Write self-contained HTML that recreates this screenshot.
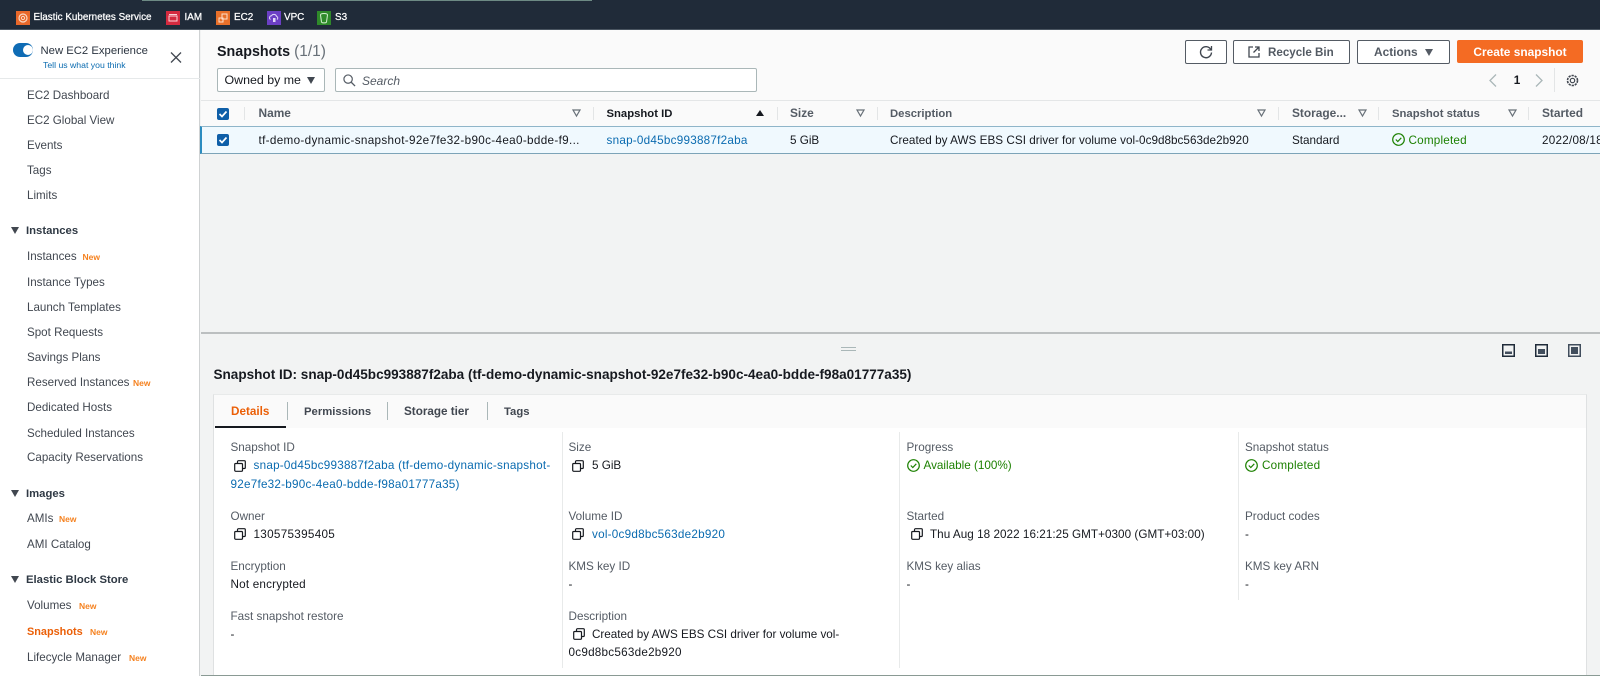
<!DOCTYPE html>
<html lang="en"><head><meta charset="utf-8"><title>Snapshots | EC2</title>
<style>
*{box-sizing:border-box}
html,body{margin:0;padding:0;width:1600px;height:676px;overflow:hidden;background:#f2f3f3}
body{position:relative;font:11.7px/16px "Liberation Sans",sans-serif;color:#16191f}
.a{position:absolute}
.t{position:absolute;white-space:nowrap;line-height:16px}
.w{letter-spacing:.24px}
.nav{color:#fff;font-size:9.9px;font-weight:400;-webkit-text-stroke:.25px #fff}
.s{color:#414750;font-size:11.6px;margin-top:1px}
.h{color:#2f3944;font-size:11.3px;font-weight:700;margin-top:1px}
.new{color:#f58220;font-size:8.5px;font-weight:700}
.th{color:#545b64;font-weight:700;font-size:11.3px}
.th0{color:#16191f;font-weight:700;font-size:11.3px}
.tab{font-size:11.3px;font-weight:700;color:#414750}
.l{color:#0a6bb0}
.g{color:#1d8102}
.lb{color:#545b64;font-size:11.7px}
.btn{position:absolute;top:40px;height:24px;background:#fff;border:1px solid #545b64;border-radius:2px}
.sep{position:absolute;width:1px;background:#e3e5e6}
.tri{position:absolute;width:0;height:0;border-left:4.5px solid transparent;border-right:4.5px solid transparent;border-top:7px solid #545b64}
.chk{position:absolute;width:12px;height:12px;background:#0f5fa8;border-radius:2px}
svg{position:absolute;display:block;overflow:visible}
</style></head><body>

<!-- top nav -->
<div class="a" style="left:0;top:0;width:1600px;height:30px;background:#202b39"></div>
<div class="a" style="left:0;top:29px;width:1600px;height:1px;background:#4a5561"></div>
<div class="a" style="left:142px;top:0;width:450px;height:1px;background:#6d8a84"></div>
<svg style="left:16px;top:10.5px" width="14" height="14" viewBox="0 0 14 14"><rect width="14" height="14" fill="#e8682a"/><circle cx="7" cy="7" r="4" fill="none" stroke="#fbd9c4" stroke-width="1.2"/><circle cx="7" cy="7" r="1.6" fill="none" stroke="#fbd9c4"/></svg>
<div class="t nav" style="left:33.5px;top:10px">Elastic Kubernetes Service</div>
<svg style="left:166px;top:10.5px" width="14" height="14" viewBox="0 0 14 14"><rect width="14" height="14" fill="#d42a3f"/><rect x="3" y="5" width="8" height="5" fill="none" stroke="#fbd3d8"/><rect x="3" y="3" width="8" height="1" fill="#fbd3d8"/></svg>
<div class="t nav" style="left:184.5px;top:10px">IAM</div>
<svg style="left:216px;top:10.5px" width="14" height="14" viewBox="0 0 14 14"><rect width="14" height="14" fill="#e8702a"/><rect x="6" y="3" width="5" height="5" fill="none" stroke="#fde0cc"/><rect x="3" y="7" width="4" height="4" fill="none" stroke="#fde0cc"/></svg>
<div class="t nav" style="left:234px;top:10px">EC2</div>
<svg style="left:266.5px;top:10.5px" width="14" height="14" viewBox="0 0 14 14"><rect width="14" height="14" fill="#6b3fc4"/><path d="M3.5 8.5a2 2 0 0 1 1-3.7 2.7 2.7 0 0 1 5 .5 1.8 1.8 0 0 1 .5 3.2" fill="none" stroke="#e2d8f8"/><rect x="6" y="7" width="2.5" height="4" fill="#e2d8f8"/></svg>
<div class="t nav" style="left:284px;top:10px">VPC</div>
<svg style="left:317px;top:10.5px" width="14" height="14" viewBox="0 0 14 14"><rect width="14" height="14" fill="#2f8a2a"/><path d="M3.5 4c0-2 7-2 7 0l-1 7c-.3 1.2-4.700 1.200-5 0z" fill="none" stroke="#d4f0d0"/></svg>
<div class="t nav" style="left:335px;top:10px">S3</div>

<!-- sidebar -->
<div class="a" style="left:0;top:30px;width:200px;height:646px;background:#fff;border-right:1px solid #cfd2d3"></div>
<div class="a" style="left:13px;top:43px;width:20px;height:14px;border-radius:7px;background:#0f6cb5"></div>
<div class="a" style="left:23px;top:45px;width:10px;height:10px;border-radius:5px;background:#fff"></div>
<div class="t" style="left:40.500px;top:43px;font-size:11.300px;color:#2b3440">New EC2 Experience</div>
<div class="t l" style="left:43px;top:56.500px;font-size:8.700px">Tell us what you think</div>
<svg style="left:170px;top:52px" width="12" height="11" viewBox="0 0 12 11"><path d="M1 .5l10 10M11 .5L1 10.500" stroke="#414750" stroke-width="1.300" fill="none"/></svg>
<div class="a" style="left:0;top:78px;width:200px;height:1px;background:#e6e9ea"></div>

<div class="t s" style="left:27px;top:87px">EC2 Dashboard</div>
<div class="t s" style="left:27px;top:112px">EC2 Global View</div>
<div class="t s" style="left:27px;top:137px">Events</div>
<div class="t s" style="left:27px;top:162px">Tags</div>
<div class="t s" style="left:27px;top:187px">Limits</div>

<div class="tri" style="left:11px;top:226.500px;border-top-color:#414750"></div>
<div class="t h" style="left:26px;top:222px">Instances</div>
<div class="t s" style="left:27px;top:248px">Instances</div><div class="t new" style="left:82.500px;top:248.500px">New</div>
<div class="t s" style="left:27px;top:274px">Instance Types</div>
<div class="t s" style="left:27px;top:299px">Launch Templates</div>
<div class="t s" style="left:27px;top:324px">Spot Requests</div>
<div class="t s" style="left:27px;top:349px">Savings Plans</div>
<div class="t s" style="left:27px;top:374px">Reserved Instances</div><div class="t new" style="left:133px;top:374.500px">New</div>
<div class="t s" style="left:27px;top:399px">Dedicated Hosts</div>
<div class="t s" style="left:27px;top:424.500px">Scheduled Instances</div>
<div class="t s" style="left:27px;top:449px">Capacity Reservations</div>

<div class="tri" style="left:11px;top:489.500px;border-top-color:#414750"></div>
<div class="t h" style="left:26px;top:484.500px">Images</div>
<div class="t s" style="left:27px;top:510px">AMIs</div><div class="t new" style="left:59px;top:510.500px">New</div>
<div class="t s" style="left:27px;top:536px">AMI Catalog</div>

<div class="tri" style="left:11px;top:575.500px;border-top-color:#414750"></div>
<div class="t h" style="left:26px;top:571px">Elastic Block Store</div>
<div class="t s" style="left:27px;top:597px">Volumes</div><div class="t new" style="left:79px;top:597.500px">New</div>
<div class="t" style="left:27px;top:624px;font-size:10.900px;font-weight:700;color:#eb5f07">Snapshots</div><div class="t new" style="left:90px;top:623.500px">New</div>
<div class="t s" style="left:27px;top:649px">Lifecycle Manager</div><div class="t new" style="left:129px;top:649.500px">New</div>

<!-- upper main header -->
<div class="a" style="left:201px;top:30px;width:1399px;height:70px;background:#fafafa"></div>
<div class="t" style="left:217px;top:44px;font-size:14.300px;font-weight:700;color:#16191f">Snapshots <span style="font-weight:400;color:#687078;font-size:15.500px">(1/1)</span></div>

<div class="a" style="left:217px;top:68px;width:108px;height:24px;background:#fff;border:1px solid #aab7b8;border-radius:2px"></div>
<div class="t" style="left:224.500px;top:72px;font-size:12.400px;color:#16191f">Owned by me</div>
<div class="tri" style="left:306.500px;top:77px;border-top-color:#414750"></div>
<div class="a" style="left:335px;top:68px;width:422px;height:24px;background:#fff;border:1px solid #aab7b8;border-radius:2px"></div>
<svg style="left:343px;top:74px" width="13" height="13" viewBox="0 0 14 14"><circle cx="5.500" cy="5.500" r="4.500" fill="none" stroke="#545b64" stroke-width="1.300"/><path d="M9 9l4 4" stroke="#545b64" stroke-width="1.400"/></svg>
<div class="t" style="left:362px;top:73px;font-size:12px;font-style:italic;color:#545b64">Search</div>

<div class="btn" style="left:1185px;width:42px"></div>
<svg style="left:1199px;top:45px" width="14" height="14" viewBox="0 0 14 14"><path d="M11.800 4.500A5.500 5.500 0 1 0 12.500 7.500" fill="none" stroke="#414750" stroke-width="1.400"/><path d="M12.500 1v4h-4" fill="none" stroke="#414750" stroke-width="1.300"/></svg>
<div class="btn" style="left:1233px;width:117px"></div>
<svg style="left:1248px;top:46px" width="12" height="12" viewBox="0 0 12 12"><path d="M5 1H1v10h10V7M7 1h4v4M11 1L5.500 6.500" fill="none" stroke="#414750" stroke-width="1.300"/></svg>
<div class="t" style="left:1268px;top:45px;font-size:11.600px;font-weight:700;color:#545b64">Recycle Bin</div>
<div class="btn" style="left:1357px;width:93px"></div>
<div class="t" style="left:1374px;top:44px;font-size:11.900px;font-weight:700;color:#545b64">Actions</div>
<div class="tri" style="left:1425px;top:49px;border-left-width:4.500px;border-right-width:4.500px;border-top-color:#545b64"></div>
<div class="a" style="left:1457px;top:40px;width:126px;height:23px;background:#f46b23;border-radius:2px"></div>
<div class="t" style="left:1457px;top:44px;width:126px;text-align:center;font-size:11.900px;font-weight:700;color:#fff">Create snapshot</div>

<svg style="left:1489px;top:74px" width="8" height="13" viewBox="0 0 8 13"><path d="M7 .5L1 6.500l6 6" fill="none" stroke="#aab7b8" stroke-width="1.300"/></svg>
<div class="t" style="left:1512px;top:73px;width:10px;text-align:center;font-size:11.700px;font-weight:700;color:#16191f">1</div>
<svg style="left:1535px;top:74px" width="8" height="13" viewBox="0 0 8 13"><path d="M1 .5l6 6-6 6" fill="none" stroke="#aab7b8" stroke-width="1.300"/></svg>
<div class="sep" style="left:1554px;top:68px;height:24px"></div>
<svg style="left:1566px;top:74px" width="13" height="13" viewBox="0 0 13 13"><circle cx="6.500" cy="6.500" r="2.200" fill="none" stroke="#414750" stroke-width="1.200"/><circle cx="6.500" cy="6.500" r="5" fill="none" stroke="#414750" stroke-width="1.600" stroke-dasharray="2.300 .9"/></svg>

<!-- table -->
<div class="a" style="left:201px;top:100px;width:1399px;height:27px;background:#fafafa;border-top:1px solid #e4e6e7"></div>
<div class="chk" style="left:217px;top:107.500px"></div>
<svg style="left:217px;top:107.500px" width="12" height="12" viewBox="0 0 12 12"><path d="M2.500 6l2.500 2.500 4.500-5" fill="none" stroke="#fff" stroke-width="1.700"/></svg>
<div class="sep" style="left:244px;top:107px;height:13px"></div>
<div class="t th" style="left:258.500px;top:105px;font-size:11.900px">Name</div>
<svg style="left:572px;top:109px" width="9" height="8" viewBox="0 0 9 8"><path d="M1 1h7L4.500 7z" fill="none" stroke="#687078" stroke-width="1.200"/></svg>
<div class="sep" style="left:592.500px;top:107px;height:13px"></div>
<div class="t th0" style="left:606.500px;top:106px">Snapshot ID</div>
<div class="a" style="left:756px;top:110px;width:0;height:0;border-left:4.500px solid transparent;border-right:4.500px solid transparent;border-bottom:6.500px solid #16191f"></div>
<div class="sep" style="left:776.500px;top:107px;height:13px"></div>
<div class="t th" style="left:790px;top:105px;font-size:11.900px">Size</div>
<svg style="left:855.500px;top:109px" width="9" height="8" viewBox="0 0 9 8"><path d="M1 1h7L4.500 7z" fill="none" stroke="#687078" stroke-width="1.200"/></svg>
<div class="sep" style="left:876.500px;top:107px;height:13px"></div>
<div class="t th" style="left:890px;top:106px">Description</div>
<svg style="left:1257px;top:109px" width="9" height="8" viewBox="0 0 9 8"><path d="M1 1h7L4.500 7z" fill="none" stroke="#687078" stroke-width="1.200"/></svg>
<div class="sep" style="left:1278px;top:107px;height:13px"></div>
<div class="t th" style="left:1292px;top:105px;font-size:11.900px">Storage...</div>
<svg style="left:1357.500px;top:109px" width="9" height="8" viewBox="0 0 9 8"><path d="M1 1h7L4.500 7z" fill="none" stroke="#687078" stroke-width="1.200"/></svg>
<div class="sep" style="left:1378px;top:107px;height:13px"></div>
<div class="t th" style="left:1392px;top:106px">Snapshot status</div>
<svg style="left:1507.500px;top:109px" width="9" height="8" viewBox="0 0 9 8"><path d="M1 1h7L4.500 7z" fill="none" stroke="#687078" stroke-width="1.200"/></svg>
<div class="sep" style="left:1528px;top:107px;height:13px"></div>
<div class="t th" style="left:1542px;top:105px;font-size:11.900px">Started</div>

<div class="a" style="left:200px;top:126px;width:1400px;height:28px;background:#f0f9fe;border-top:1px solid #8fb5c9;border-bottom:1px solid #7da4b8;border-left:2px solid #2b8cc0"></div>
<div class="chk" style="left:217px;top:134px"></div>
<svg style="left:217px;top:134px" width="12" height="12" viewBox="0 0 12 12"><path d="M2.500 6l2.500 2.500 4.500-5" fill="none" stroke="#fff" stroke-width="1.700"/></svg>
<div class="t" style="left:258.500px;top:133px;width:322px;overflow:hidden;letter-spacing:.33px">tf-demo-dynamic-snapshot-92e7fe32-b90c-4ea0-bdde-f9...</div>
<div class="t l w" style="left:606.500px;top:133px">snap-0d45bc993887f2aba</div>
<div class="t" style="left:790px;top:133px">5 GiB</div>
<div class="t" style="left:890px;top:133px;letter-spacing:.03px">Created by AWS EBS CSI driver for volume vol-0c9d8bc563de2b920</div>
<div class="t" style="left:1292px;top:133px">Standard</div>
<svg style="left:1392px;top:133px" width="13" height="13" viewBox="0 0 13 13"><circle cx="6.500" cy="6.500" r="5.800" fill="none" stroke="#1d8102" stroke-width="1.200"/><path d="M3.800 6.500l2 2 3.500-3.700" fill="none" stroke="#1d8102" stroke-width="1.200"/></svg>
<div class="t g" style="left:1408.500px;top:133px;letter-spacing:.2px">Completed</div>
<div class="t w" style="left:1542px;top:133px;width:58px;overflow:hidden">2022/08/18</div>

<!-- divider -->
<div class="a" style="left:201px;top:332px;width:1399px;height:2px;background:#bcbfc0"></div>
<div class="a" style="left:841px;top:347px;width:15px;height:1px;background:#aab7b8"></div>
<div class="a" style="left:841px;top:350px;width:15px;height:1px;background:#aab7b8"></div>

<svg style="left:1502px;top:344px" width="13" height="13" viewBox="0 0 13 13"><rect x=".75" y=".75" width="11.500" height="11.500" fill="#f2f3f3" stroke="#202b39" stroke-width="1.500"/><rect x="3" y="7.500" width="7" height="2.500" fill="#414d5c"/></svg>
<svg style="left:1535px;top:344px" width="13" height="13" viewBox="0 0 13 13"><rect x=".75" y=".75" width="11.500" height="11.500" fill="#f2f3f3" stroke="#202b39" stroke-width="1.500"/><rect x="3" y="5" width="7" height="5" fill="#414d5c"/></svg>
<svg style="left:1568px;top:344px" width="13" height="13" viewBox="0 0 13 13"><rect x=".75" y=".75" width="11.500" height="11.500" fill="#f2f3f3" stroke="#414d5c" stroke-width="1.500"/><rect x="3" y="3" width="7" height="7" fill="#414d5c"/></svg>

<div class="t" style="left:213.500px;top:367px;font-size:13.550px;font-weight:700;color:#16191f">Snapshot ID: snap-0d45bc993887f2aba (tf-demo-dynamic-snapshot-92e7fe32-b90c-4ea0-bdde-f98a01777a35)</div>

<!-- card -->
<div class="a" style="left:213px;top:394px;width:1374px;height:281px;background:#fff;border-left:1px solid #dfe1e2;border-right:1px solid #dfe1e2;border-top:1px solid #e8eaea"></div>
<div class="a" style="left:214px;top:395px;width:1372px;height:33px;background:#fafafa"></div>
<div class="a" style="left:215px;top:426px;width:71px;height:2px;background:#16191f"></div>
<div class="t" style="left:231px;top:403.500px;font-size:11.700px;font-weight:700;color:#eb5f07">Details</div>
<div class="a" style="left:286.500px;top:402px;width:1px;height:18px;background:#aab7b8"></div>
<div class="t tab" style="left:304px;top:404px">Permissions</div>
<div class="a" style="left:386.500px;top:402px;width:1px;height:18px;background:#aab7b8"></div>
<div class="t tab" style="left:404px;top:403.500px;font-size:11.700px">Storage tier</div>
<div class="a" style="left:486.500px;top:402px;width:1px;height:18px;background:#aab7b8"></div>
<div class="t tab" style="left:504px;top:404px">Tags</div>

<div class="sep" style="left:561.500px;top:432px;height:236px;background:#e8eaea"></div>
<div class="sep" style="left:899px;top:432px;height:236px;background:#e8eaea"></div>
<div class="sep" style="left:1237.500px;top:432px;height:168px;background:#e8eaea"></div>

<!-- col 1 -->
<div class="t lb" style="left:230.500px;top:440px">Snapshot ID</div>
<svg style="left:234px;top:459.500px" width="12" height="12" viewBox="0 0 12 12"><rect x="3.500" y=".7" width="7.800" height="7.800" rx="1" fill="none" stroke="#16191f" stroke-width="1.200"/><rect x=".7" y="3.500" width="7.800" height="7.800" rx="1" fill="#fff" stroke="#16191f" stroke-width="1.200"/></svg>
<div class="t l w" style="left:253.500px;top:458px">snap-0d45bc993887f2aba (tf-demo-dynamic-snapshot-</div>
<div class="t l w" style="left:230.500px;top:476.500px">92e7fe32-b90c-4ea0-bdde-f98a01777a35)</div>
<div class="t lb" style="left:230.500px;top:509px">Owner</div>
<svg style="left:234px;top:527.500px" width="12" height="12" viewBox="0 0 12 12"><rect x="3.500" y=".7" width="7.800" height="7.800" rx="1" fill="none" stroke="#16191f" stroke-width="1.200"/><rect x=".7" y="3.500" width="7.800" height="7.800" rx="1" fill="#fff" stroke="#16191f" stroke-width="1.200"/></svg>
<div class="t" style="left:253.500px;top:527px;letter-spacing:.3px">130575395405</div>
<div class="t lb" style="left:230.500px;top:559px">Encryption</div>
<div class="t" style="left:230.500px;top:577px;letter-spacing:.2px">Not encrypted</div>
<div class="t lb" style="left:230.500px;top:609px">Fast snapshot restore</div>
<div class="t" style="left:230.500px;top:627px">-</div>

<!-- col 2 -->
<div class="t lb" style="left:568.500px;top:440px">Size</div>
<svg style="left:572px;top:459.500px" width="12" height="12" viewBox="0 0 12 12"><rect x="3.500" y=".7" width="7.800" height="7.800" rx="1" fill="none" stroke="#16191f" stroke-width="1.200"/><rect x=".7" y="3.500" width="7.800" height="7.800" rx="1" fill="#fff" stroke="#16191f" stroke-width="1.200"/></svg>
<div class="t" style="left:592px;top:458px">5 GiB</div>
<div class="t lb" style="left:568.500px;top:509px">Volume ID</div>
<svg style="left:572px;top:527.500px" width="12" height="12" viewBox="0 0 12 12"><rect x="3.500" y=".7" width="7.800" height="7.800" rx="1" fill="none" stroke="#16191f" stroke-width="1.200"/><rect x=".7" y="3.500" width="7.800" height="7.800" rx="1" fill="#fff" stroke="#16191f" stroke-width="1.200"/></svg>
<div class="t l w" style="left:592px;top:527px">vol-0c9d8bc563de2b920</div>
<div class="t lb" style="left:568.500px;top:559px">KMS key ID</div>
<div class="t" style="left:568.500px;top:577px">-</div>
<div class="t lb" style="left:568.500px;top:609px">Description</div>
<svg style="left:573px;top:628px" width="12" height="12" viewBox="0 0 12 12"><rect x="3.500" y=".7" width="7.800" height="7.800" rx="1" fill="none" stroke="#16191f" stroke-width="1.200"/><rect x=".7" y="3.500" width="7.800" height="7.800" rx="1" fill="#fff" stroke="#16191f" stroke-width="1.200"/></svg>
<div class="t" style="left:592px;top:627px;letter-spacing:-.01px">Created by AWS EBS CSI driver for volume vol-</div>
<div class="t w" style="left:568.500px;top:645px">0c9d8bc563de2b920</div>

<!-- col 3 -->
<div class="t lb" style="left:906.500px;top:440px">Progress</div>
<svg style="left:906.500px;top:458.500px" width="13" height="13" viewBox="0 0 13 13"><circle cx="6.500" cy="6.500" r="5.800" fill="none" stroke="#1d8102" stroke-width="1.200"/><path d="M3.800 6.500l2 2 3.500-3.700" fill="none" stroke="#1d8102" stroke-width="1.200"/></svg>
<div class="t g" style="left:923.500px;top:458px">Available (100%)</div>
<div class="t lb" style="left:906.500px;top:509px">Started</div>
<svg style="left:911px;top:527.500px" width="12" height="12" viewBox="0 0 12 12"><rect x="3.500" y=".7" width="7.800" height="7.800" rx="1" fill="none" stroke="#16191f" stroke-width="1.200"/><rect x=".7" y="3.500" width="7.800" height="7.800" rx="1" fill="#fff" stroke="#16191f" stroke-width="1.200"/></svg>
<div class="t" style="left:930px;top:527px;letter-spacing:.04px">Thu Aug 18 2022 16:21:25 GMT+0300 (GMT+03:00)</div>
<div class="t lb" style="left:906.500px;top:559px">KMS key alias</div>
<div class="t" style="left:906.500px;top:577px">-</div>

<!-- col 4 -->
<div class="t lb" style="left:1245px;top:440px">Snapshot status</div>
<svg style="left:1245px;top:458.500px" width="13" height="13" viewBox="0 0 13 13"><circle cx="6.500" cy="6.500" r="5.800" fill="none" stroke="#1d8102" stroke-width="1.200"/><path d="M3.800 6.500l2 2 3.500-3.700" fill="none" stroke="#1d8102" stroke-width="1.200"/></svg>
<div class="t g" style="left:1262px;top:458px;letter-spacing:.2px">Completed</div>
<div class="t lb" style="left:1245px;top:509px">Product codes</div>
<div class="t" style="left:1245px;top:527px">-</div>
<div class="t lb" style="left:1245px;top:559px">KMS key ARN</div>
<div class="t" style="left:1245px;top:577px">-</div>

<div class="a" style="left:201px;top:675px;width:1399px;height:1px;background:#8a9a94"></div>
</body></html>
